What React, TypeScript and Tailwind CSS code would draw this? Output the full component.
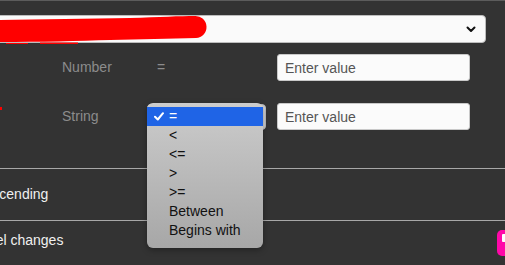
import React from 'react';

const options = ['=', '<', '<=', '>', '>=', 'Between', 'Begins with'];

function Chevron() {
  return (
    <svg width="10" height="7" viewBox="0 0 10 7" className="shrink-0">
      <path d="M1.5 1.5 L5 5 L8.5 1.5" fill="none" stroke="#111" strokeWidth="2" strokeLinecap="round" strokeLinejoin="round" />
    </svg>
  );
}

function Check() {
  return (
    <svg width="10" height="9" viewBox="0 0 10 9" className="shrink-0">
      <path d="M1 4.8 L3.8 7.5 L9 1.2" fill="none" stroke="#fff" strokeWidth="2" strokeLinecap="round" strokeLinejoin="round" />
    </svg>
  );
}

function ValueInput() {
  return (
    <input
      placeholder="Enter value"
      className="w-[193px] h-[27px] rounded-[3px] border border-[#c9c9c9] bg-[#fbfbfb] pl-[7px] text-[14px] text-[#222] placeholder:text-[#555] outline-none"
    />
  );
}

export default function App() {
  return (
    <div className="relative w-[505px] h-[265px] overflow-hidden bg-[#333333] font-['Liberation_Sans',Arial,sans-serif]">
      <div className="h-px bg-[#5c5c5c]" />

      {/* table select */}
      <div className="pt-[14px] pr-[19px]">
        <div className="-ml-[4px] h-[28px] rounded-[4px] border border-[#bdbdbd] bg-[#fafafa] flex items-center justify-end pr-[9px]">
          <Chevron />
        </div>
      </div>

      {/* filter rows */}
      <div className="pt-[11px] flex flex-col gap-[22px]">
        <div className="flex items-center pl-[62px]">
          <span className="w-[85px] text-[14px] text-[#8c8c8c]">Number</span>
          <span className="w-[130px] pl-[10px] text-[14px] text-[#8c8c8c]">=</span>
          <ValueInput />
        </div>
        <div className="flex items-center pl-[62px]">
          <span className="w-[85px] text-[14px] text-[#8c8c8c]">String</span>
          <div className="w-[119px] h-[26px] rounded-[4px] bg-[#d4d4d4] border border-[#bcbcbc]" />
          <div className="w-[11px]" />
          <ValueInput />
        </div>
      </div>

      {/* sort + footer */}
      <div className="mt-[38px] border-t border-[#a8a8a8] h-[52px] flex items-center">
        <span className="-ml-[17px] text-[14px] text-[#f0f0f0]">Ascending</span>
      </div>
      <div className="border-t border-[#a8a8a8] h-[40px] flex items-center justify-between">
        <span className="-ml-[37px] text-[14px] text-[#f0f0f0]">Cancel changes</span>
        <div className="-mr-[22px] mt-[4px] w-[30px] h-[26px] rounded-[5px] bg-[#ff08a9] flex items-start pl-[5px] pt-[4px]">
          <div className="w-[4px] h-[8px] bg-white rounded-[1px]" />
        </div>
      </div>

      {/* red redaction scribble */}
      <svg className="absolute left-0 top-0" width="505" height="50" viewBox="0 0 505 50">
        <path
          d="M0 20 C40 19 90 19 130 18 C160 17 180 16 195 16 A11 11 0 0 1 196 38 C170 39 140 39 110 40 C80 41 40 42 0 42 Z"
          fill="#ff0000"
        />
        <path d="M6 43 L28 43 L28 44 L6 44 Z M40 42.5 L78 42.5 L78 44 L40 44 Z" fill="#ff0000" />
      </svg>
      <div className="absolute left-0 top-[107px] w-[2px] h-[3px] bg-[#ff0000]" />

      {/* open operator menu */}
      <div className="absolute left-[147px] top-[103px] w-[116px] h-[145px] rounded-[6px] bg-gradient-to-b from-[#cccccc] to-[#a7a7a7] pt-[4px] shadow-[0_2px_6px_rgba(0,0,0,0.35)]">
        {options.map((o, i) => (
          <div
            key={o}
            className={
              i === 0
                ? 'h-[19px] flex items-center bg-[#1f64e6] text-white text-[14px]'
                : 'h-[19px] flex items-center text-[#111] text-[14px]'
            }
          >
            <span className="w-[22px] flex justify-center pl-[2px]">{i === 0 && <Check />}</span>
            <span>{o}</span>
          </div>
        ))}
      </div>
    </div>
  );
}
